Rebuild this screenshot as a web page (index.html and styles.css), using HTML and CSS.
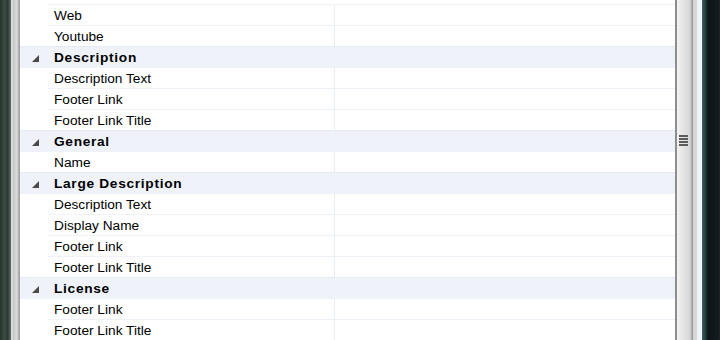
FILE: index.html
```html
<html>
  <head>
    <title>Properties</title>
    <link rel="stylesheet" href="styles.css">
  </head>
  <body>
    <div class="desk desk-left"></div>
    <div class="frame-left"></div>
    <div class="grid">
      <div class="row top"></div>
      <div class="row prop"><span class="gutter"></span><span class="name">Web</span><span class="value"></span></div>
      <div class="row prop"><span class="gutter"></span><span class="name">Youtube</span><span class="value"></span></div>
      <div class="row cat">
        <span class="gutter"><svg width="7" height="7" viewBox="0 0 7 7"><polygon points="7,0 7,7 0,7" fill="#4a4a4a" /></svg></span>
        <span class="title">Description</span>
      </div>
      <div class="row prop"><span class="gutter"></span><span class="name">Description Text</span><span class="value"></span></div>
      <div class="row prop"><span class="gutter"></span><span class="name">Footer Link</span><span class="value"></span></div>
      <div class="row prop"><span class="gutter"></span><span class="name">Footer Link Title</span><span class="value"></span></div>
      <div class="row cat">
        <span class="gutter"><svg width="7" height="7" viewBox="0 0 7 7"><polygon points="7,0 7,7 0,7" fill="#4a4a4a" /></svg></span>
        <span class="title">General</span>
      </div>
      <div class="row prop"><span class="gutter"></span><span class="name">Name</span><span class="value"></span></div>
      <div class="row cat">
        <span class="gutter"><svg width="7" height="7" viewBox="0 0 7 7"><polygon points="7,0 7,7 0,7" fill="#4a4a4a" /></svg></span>
        <span class="title">Large Description</span>
      </div>
      <div class="row prop"><span class="gutter"></span><span class="name">Description Text</span><span class="value"></span></div>
      <div class="row prop"><span class="gutter"></span><span class="name">Display Name</span><span class="value"></span></div>
      <div class="row prop"><span class="gutter"></span><span class="name">Footer Link</span><span class="value"></span></div>
      <div class="row prop"><span class="gutter"></span><span class="name">Footer Link Title</span><span class="value"></span></div>
      <div class="row cat">
        <span class="gutter"><svg width="7" height="7" viewBox="0 0 7 7"><polygon points="7,0 7,7 0,7" fill="#4a4a4a" /></svg></span>
        <span class="title">License</span>
      </div>
      <div class="row prop"><span class="gutter"></span><span class="name">Footer Link</span><span class="value"></span></div>
      <div class="row prop"><span class="gutter"></span><span class="name">Footer Link Title</span><span class="value"></span></div>
    </div>
    <div class="scrollbar">
      <div class="thumb">
        <div class="grip"><i></i><i></i><i></i><i></i></div>
      </div>
    </div>
    <div class="frame-right"></div>
    <div class="desk desk-right"></div>
  </body>
</html>
```

FILE: styles.css
```css
body {
  margin: 0;
  display: flex;
  height: 340px;
  overflow: hidden;
  background: #1a2420;
  font-family: "Liberation Sans", Arial, sans-serif;
  font-size: 13.7px;
  color: #000;
}

.desk-left {
  width: 11px;
  background: linear-gradient(90deg, #26322d 0%, #3b4d45 40%, #2c3a34 70%, #5d6f67 100%);
}
.frame-left {
  width: 9px;
  background: linear-gradient(90deg, #d6dcda 0px, #d6dcda 2px, #c4c4c4 2px, #dedede 6px, #a4a4a4 8px, #a4a4a4 9px);
}

.grid {
  width: 655px;
  background: #fff;
  display: flex;
  flex-direction: column;
}

.row {
  display: flex;
  flex-shrink: 0;
  height: 21px;
}
.row.top {
  height: 4px;
  margin-left: 28px;
  border-bottom: 1px solid #eef2f8;
}

.gutter {
  width: 28px;
  flex-shrink: 0;
  display: flex;
  align-items: center;
  justify-content: flex-end;
  padding-right: 9px;
  box-sizing: border-box;
}
.prop .name {
  width: 287px;
  padding: 1px 0 0 6px;
  line-height: 19px;
  box-sizing: border-box;
  border-right: 1px solid #e8edf4;
  border-bottom: 1px solid #eef2f8;
  white-space: nowrap;
}
.prop .value {
  flex: 1;
  border-bottom: 1px solid #eef2f8;
}

.cat {
  background: #eff2f8;
  border-top: 1px dotted #dde3ec;
  margin-top: -1px;
  line-height: 21px;
}
.cat .gutter {
  padding-top: 2px;
}
.cat .title {
  padding: 1px 0 0 6px;
  line-height: 20px;
  font-weight: bold;
  letter-spacing: 0.7px;
}

.scrollbar {
  width: 22px;
  background: linear-gradient(90deg, #8e8e8e 0px, #8e8e8e 2px, #f4f4f4 2px, #e9e9e9 6px, #d9d9d9 14px, #c8c8c8 16px, #9c9c9c 17px, #9c9c9c 18px, #d6d6d6 18px, #d6d6d6 22px);
}
.thumb {
  height: 100%;
  display: flex;
  align-items: flex-start;
  justify-content: center;
}
.grip {
  margin-top: 135px;
  margin-right: 6px;
  display: flex;
  flex-direction: column;
  gap: 1px;
}
.grip i {
  display: block;
  width: 9px;
  height: 2px;
  background: #5c5c5c;
}

.frame-right {
  width: 5px;
  background: linear-gradient(90deg, #eaf0f6, #f6f9fc);
}
.desk-right {
  width: 17px;
  background: linear-gradient(90deg, #3e5c5c 0px, #2a4444 3px, #0c1418 6px, #121c22 17px);
}
```
